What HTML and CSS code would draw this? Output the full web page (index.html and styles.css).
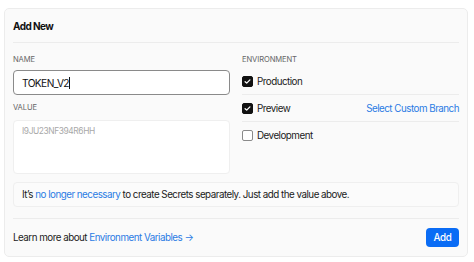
FILE: index.html
```html
<!DOCTYPE html>
<html>
<head>
<meta charset="utf-8">
<link rel="stylesheet" href="styles.css">
</head>
<body>
<div class="card">
  <div class="card-head">Add New</div>
  <div class="form">
    <div class="col">
      <div class="label">NAME</div>
      <div class="input focused"><span>TOKEN_V2</span><span class="caret"></span></div>
      <div class="label label-value">VALUE</div>
      <div class="textarea">I9JU23NF394R6HH</div>
    </div>
    <div class="col">
      <div class="label">ENVIRONMENT</div>
      <div class="env-row first">
        <span class="check on"><svg viewBox="0 0 11 11" width="11" height="11"><path d="M3.1 5.7 L4.7 7.1 L7.9 3.9" fill="none" stroke="#fff" stroke-width="1.3" stroke-linecap="round" stroke-linejoin="round"/></svg></span>
        <span class="env-name">Production</span>
      </div>
      <div class="env-row">
        <span class="check on"><svg viewBox="0 0 11 11" width="11" height="11"><path d="M3.1 5.7 L4.7 7.1 L7.9 3.9" fill="none" stroke="#fff" stroke-width="1.3" stroke-linecap="round" stroke-linejoin="round"/></svg></span>
        <span class="env-name">Preview</span>
        <a class="link branch">Select Custom Branch</a>
      </div>
      <div class="env-row last">
        <span class="check"></span>
        <span class="env-name">Development</span>
      </div>
    </div>
  </div>
  <div class="note"><p class="note-text">It’s <a class="link">no longer necessary</a> to create Secrets separately. Just add the value above.</p></div>
  <div class="footer">
    <p class="learn">Learn more about <a class="link">Environment Variables →</a></p>
    <button class="btn">Add</button>
  </div>
</div>
</body>
</html>
```

FILE: styles.css
```css
* { box-sizing: border-box; }
html, body { background: #fff; }
body {
  margin: 8px 6px 0 4px;
  font-family: Inter, "Noto Sans", sans-serif;
  color: #1a1a1a;
  font-size: 9.8px;
  letter-spacing: -0.5px;
}
p { margin: 0; }
.card {
  background: #fafafa;
  border: 1px solid #ececec;
  border-radius: 5px;
  padding: 0 8px 9px 8px;
}
.card-head {
  height: 34px;
  display: flex;
  align-items: center;
  padding-top: 1px;
  font-weight: 700;
  font-size: 10px;
  letter-spacing: -0.55px;
  color: #111;
  border-bottom: 1px solid #ececec;
}
.form {
  display: grid;
  grid-template-columns: 217px 217px;
  gap: 12px;
  padding-top: 11px;
}
.col { display: flex; flex-direction: column; }
.label {
  font-size: 7.6px;
  color: #666;
  letter-spacing: -0.1px;
  height: 12px;
  line-height: 12px;
}
.input {
  margin-top: 4px;
  height: 25px;
  border: 1px solid #8a8a8a;
  border-radius: 4px;
  background: #fff;
  padding: 0 8px;
  display: flex;
  align-items: center;
  font-size: 10.2px;
  letter-spacing: -0.6px;
  color: #111;
}
.caret {
  display: inline-block;
  width: 1px;
  height: 12px;
  background: #111;
}
.label-value { margin-top: 7px; }
.textarea {
  margin-top: 6px;
  height: 54px;
  border: 1px solid #efefef;
  border-radius: 4px;
  background: #fff;
  padding: 5px 8px;
  font-size: 8.4px;
  letter-spacing: -0.4px;
  color: #a8a8a8;
}
.env-row {
  display: flex;
  align-items: center;
  height: 27px;
  border-bottom: 1px solid #ececec;
}
.env-row.first { margin-top: 2px; }
.env-row.last { border-bottom: none; }
.check {
  width: 11px;
  height: 11px;
  border-radius: 2px;
  border: 1px solid #8a8a8a;
  background: #fff;
  display: inline-flex;
  flex-shrink: 0;
}
.check.on { background: #111; border-color: #111; }
.check svg { margin: -1px; }
.env-name { margin-left: 4px; }
.link { color: #2a7be4; text-decoration: none; }
.branch { margin-left: auto; }
.note {
  margin-top: 8px;
  height: 25px;
  border: 1px solid #efefef;
  border-radius: 4px;
  background: #fbfbfb;
  display: flex;
  align-items: center;
  padding: 0 8px;
}
.footer {
  margin-top: 11px;
  border-top: 1px solid #ececec;
  padding-top: 9px;
  display: flex;
  align-items: center;
  justify-content: space-between;
}
.btn {
  background: #0a6cf5;
  color: #fff;
  border: none;
  border-radius: 4px;
  height: 19px;
  width: 33px;
  font-family: Inter, sans-serif;
  font-size: 9.8px;
  letter-spacing: -0.3px;
  font-weight: 500;
  padding: 0;
}
```
